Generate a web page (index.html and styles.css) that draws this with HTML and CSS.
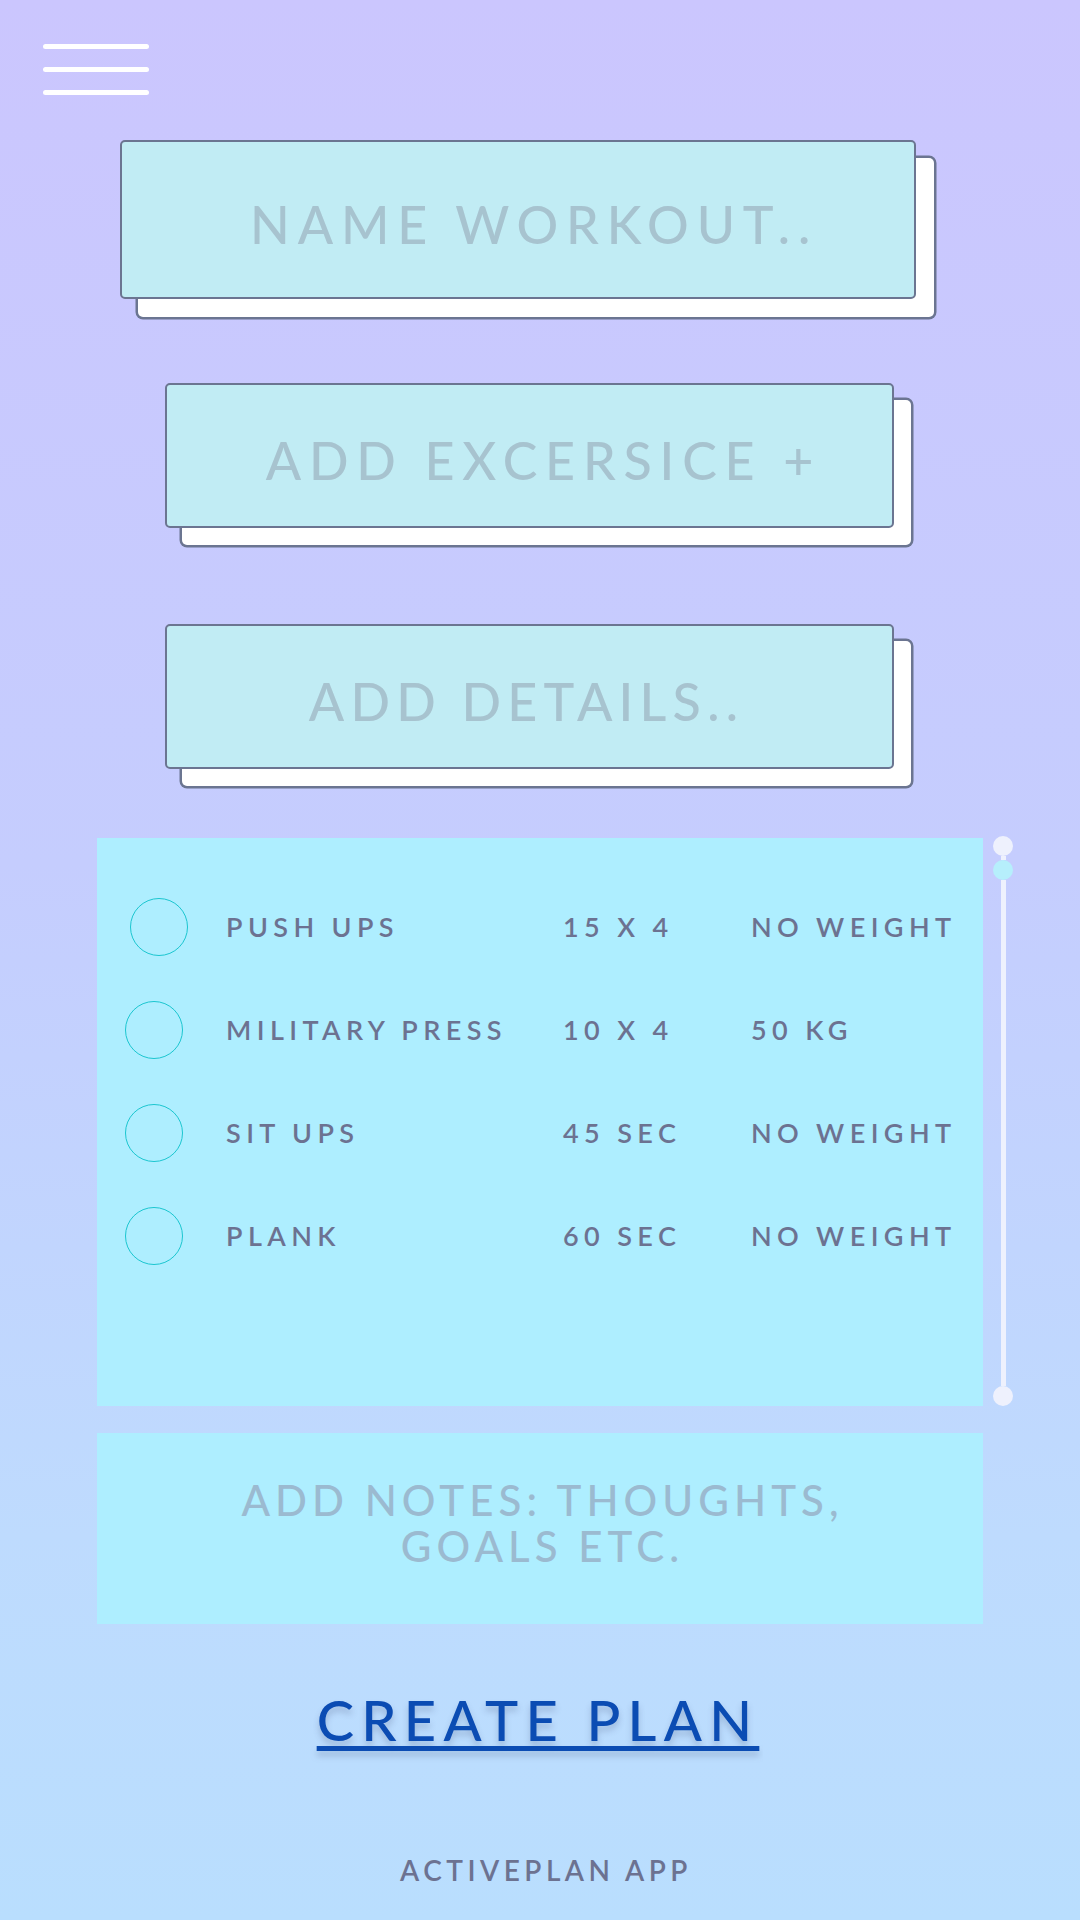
FILE: index.html
```html
<!DOCTYPE html>
<html lang="en">
<head>
<meta charset="utf-8">
<title>ActivePlan</title>
<link rel="stylesheet" href="styles.css">
</head>
<body>
<div class="page">
  <div class="menu" aria-label="Menu">
    <span class="bar"></span>
    <span class="bar"></span>
    <span class="bar"></span>
  </div>

  <div class="field field-name"><span class="ph">NAME WORKOUT..</span></div>
  <div class="field field-small field-exercise"><span class="ph">ADD EXCERSICE +</span></div>
  <div class="field field-small field-details"><span class="ph">ADD DETAILS..</span></div>

  <div class="list-wrap">
    <div class="list">
      <div class="row">
        <span class="check check-shift"></span>
        <span class="cell cell-name">PUSH UPS</span>
        <span class="cell">15 X 4</span>
        <span class="cell">NO WEIGHT</span>
      </div>
      <div class="row">
        <span class="check"></span>
        <span class="cell cell-name">MILITARY PRESS</span>
        <span class="cell">10 X 4</span>
        <span class="cell">50 KG</span>
      </div>
      <div class="row">
        <span class="check"></span>
        <span class="cell cell-name">SIT UPS</span>
        <span class="cell">45 SEC</span>
        <span class="cell">NO WEIGHT</span>
      </div>
      <div class="row">
        <span class="check"></span>
        <span class="cell cell-name">PLANK</span>
        <span class="cell">60 SEC</span>
        <span class="cell">NO WEIGHT</span>
      </div>
    </div>
    <div class="scroll">
      <span class="dot dot-end"></span>
      <span class="track track-short"></span>
      <span class="dot dot-thumb"></span>
      <span class="track track-long"></span>
      <span class="dot dot-end"></span>
    </div>
  </div>

  <div class="notes"><span class="notes-text">ADD NOTES: THOUGHTS,<br>GOALS ETC.</span></div>

  <a class="create" href="#">CREATE PLAN</a>

  <div class="footer">ACTIVEPLAN APP</div>
</div>
</body>
</html>
```

FILE: styles.css
```css
html, body {
  margin: 0;
  padding: 0;
}

body {
  width: 1080px;
  height: 1920px;
  overflow: hidden;
  background: linear-gradient(180deg, #cbc6fe 0%, #c5cdfe 45%, #bedbfe 80%, #b9defe 100%);
  font-family: "Lato", "Open Sans", sans-serif;
}

.page {
  display: flex;
  flex-direction: column;
  align-items: flex-start;
  height: 1920px;
}

/* hamburger */
.menu {
  margin-top: 44px;
  margin-left: 43px;
  width: 106px;
  display: flex;
  flex-direction: column;
  gap: 18px;
}

.bar {
  display: block;
  height: 5px;
  border-radius: 3px;
  background: #ffffff;
}

/* input-like stacked boxes */
.field {
  box-sizing: border-box;
  display: flex;
  align-items: center;
  justify-content: center;
  background: #c1ecf4;
  border: 2.5px solid #6b7591;
  border-radius: 5px;
  box-shadow: 18px 18px 0 0 #ffffff, 18px 18px 0 2.5px #6b7591;
  padding-top: 8px;
}

.field-name {
  margin-top: 45px;
  margin-left: 120px;
  width: 796px;
  height: 159px;
  padding-left: 32px;
}

.field-small {
  margin-left: 165px;
  width: 729px;
  height: 145px;
  box-shadow: 17px 17px 0 0 #ffffff, 17px 17px 0 2.5px #6b7591;
}

.field-exercise {
  margin-top: 84px;
  padding-left: 28px;
}

.field-details {
  margin-top: 96px;
  padding-right: 6px;
}

.ph {
  color: #a7c3cf;
  font-size: 52px;
  font-weight: 500;
  letter-spacing: 0.15em;
  white-space: nowrap;
}

.field-details .ph {
  letter-spacing: 0.12em;
}

/* exercise list */
.list-wrap {
  margin-top: 69px;
  margin-left: 97px;
  display: flex;
  align-items: flex-start;
}

.list {
  box-sizing: border-box;
  width: 886px;
  height: 568px;
  background: #aeeeff;
  padding-top: 37px;
  display: flex;
  flex-direction: column;
}

.row {
  height: 103px;
  display: grid;
  grid-template-columns: 58px 380px 188px auto;
  align-items: center;
  padding-left: 28px;
}

.check {
  box-sizing: border-box;
  width: 58px;
  height: 58px;
  border: 1.6px solid #1bc6d0;
  border-radius: 50%;
}

.check-shift {
  margin-left: 5px;
}

.cell {
  color: #6c7291;
  font-size: 27px;
  font-weight: 600;
  letter-spacing: 0.2em;
  white-space: nowrap;
}

.cell-name {
  margin-left: 43px;
}

/* scrollbar */
.scroll {
  margin-top: -2px;
  margin-left: 10px;
  width: 20px;
  height: 570px;
  display: flex;
  flex-direction: column;
  align-items: center;
}

.dot {
  display: block;
  width: 20px;
  height: 20px;
  border-radius: 50%;
  flex: none;
}

.dot-end {
  background: #eef1fd;
}

.dot-thumb {
  background: #b6effc;
}

.track {
  display: block;
  width: 5px;
  background: #eef1fd;
}

.track-short {
  height: 4px;
}

.track-long {
  flex: 1;
}

/* notes */
.notes {
  box-sizing: border-box;
  margin-top: 27px;
  margin-left: 97px;
  width: 886px;
  height: 191px;
  background: #aeeeff;
  display: flex;
  justify-content: center;
  padding-top: 44px;
  text-align: center;
}

.notes-text {
  color: #9bbad0;
  font-size: 42px;
  font-weight: 500;
  line-height: 46px;
  letter-spacing: 0.12em;
  padding-left: 0.12em;
}

/* create plan */
.create {
  align-self: center;
  margin-top: 62px;
  margin-left: -4px;
  color: #0b4cb3;
  font-size: 56px;
  font-weight: 500;
  letter-spacing: 0.13em;
  text-decoration: underline;
  text-decoration-thickness: 5px;
  text-underline-offset: 5px;
  text-shadow: 0 5px 6px rgba(60, 70, 110, 0.25);
}

.footer {
  align-self: center;
  margin-top: 100px;
  margin-left: 12px;
  color: #6c7291;
  font-size: 28px;
  font-weight: 600;
  letter-spacing: 0.16em;
}
```
